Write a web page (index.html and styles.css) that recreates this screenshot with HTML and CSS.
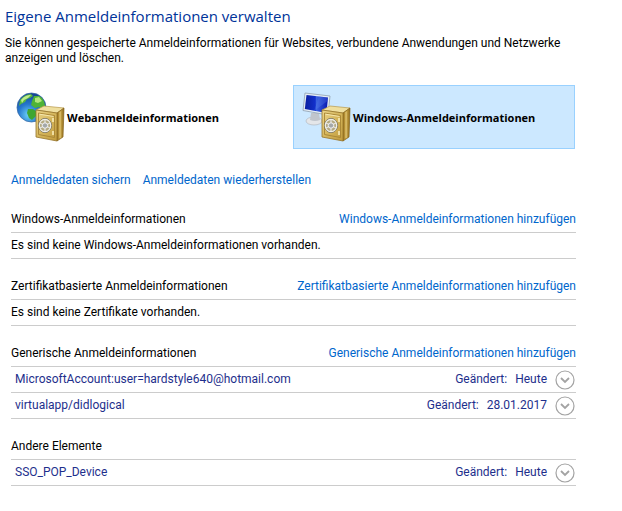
FILE: index.html
```
<!DOCTYPE html>
<html lang="de">
<head>
    <meta charset="UTF-8">
    <title>Anmeldeinformationsverwaltung</title>
    <link rel="stylesheet" href="styles.css">
</head>
<body>
    <!-- shared shapes -->
    <svg class="defs" width="0" height="0" aria-hidden="true">
        <defs>
            <linearGradient id="front" x1="0" y1="0" x2="1" y2="1">
                <stop offset="0" stop-color="#ecd68c"/>
                <stop offset="0.5" stop-color="#d5b65c"/>
                <stop offset="1" stop-color="#c09a3c"/>
            </linearGradient>
            <linearGradient id="side" x1="0" y1="0" x2="1" y2="0">
                <stop offset="0" stop-color="#a37b20"/>
                <stop offset="0.5" stop-color="#c9a74c"/>
                <stop offset="1" stop-color="#8d6716"/>
            </linearGradient>
            <radialGradient id="sea" cx="0.4" cy="0.75" r="0.8">
                <stop offset="0" stop-color="#6fd4fa"/>
                <stop offset="0.45" stop-color="#2678cf"/>
                <stop offset="1" stop-color="#123a86"/>
            </radialGradient>
            <linearGradient id="screen" x1="0" y1="0" x2="1" y2="0">
                <stop offset="0" stop-color="#0a1fa0"/>
                <stop offset="0.45" stop-color="#1230cc"/>
                <stop offset="0.5" stop-color="#3a62e0"/>
                <stop offset="1" stop-color="#0616b0"/>
            </linearGradient>
            <symbol id="safe" viewBox="0 0 50 50">
                <path d="M20 18 28 14 48 16 41 21z" fill="#efdf9f" stroke="#b8984a" stroke-width=".7"/>
                <path d="M41 21 48 16 47 45 41 49z" fill="url(#side)" stroke="#84621a" stroke-width=".7"/>
                <path d="M44 20v26" stroke="#e2c878" stroke-width="1"/>
                <path d="M20 18 41 21V49L20 45z" fill="url(#front)" stroke="#96742a" stroke-width=".8"/>
                <path d="M22.500 21 38.500 23.500V45.500L22.500 42.500z" fill="none" stroke="#a78434" stroke-width=".9"/>
                <path d="M23.500 22.200 37.500 24.500" stroke="#fbf0bd" stroke-width=".8"/>
                <path d="M37 26v4M37 39v4" stroke="#fbf0bd" stroke-width="1.500"/>
                <ellipse cx="29" cy="33.500" rx="6.500" ry="7" fill="#b5aa82" stroke="#777366" stroke-width="1"/>
                <ellipse cx="29" cy="33.500" rx="5.700" ry="6.200" fill="none" stroke="#f0efe7" stroke-width="1.200"/>
                <path d="M29 28v11M24 31l10 5M24 36l10-5" stroke="#e4e5e3" stroke-width="1.200"/>
                <circle cx="29" cy="33.500" r="2.700" fill="#a3a7a9" stroke="#f8f8f8" stroke-width=".9"/>
            </symbol>
            <symbol id="arrow" viewBox="0 0 20 20">
                <circle cx="10" cy="10" r="9" fill="#fff" stroke="#a3a3a3" stroke-width="1.200"/>
                <path d="M6 8l4 4 4-4" fill="none" stroke="#a3a3a3" stroke-width="1.800"/>
            </symbol>
        </defs>
    </svg>

    <main>
        <h1>Eigene Anmeldeinformationen verwalten</h1>
        <p class="intro">Sie können gespeicherte Anmeldeinformationen für Websites, verbundene Anwendungen und Netzwerke anzeigen und löschen.</p>

        <div class="vaults">
            <button class="vault" type="button">
                <svg class="vault-icon" viewBox="0 0 50 50" aria-hidden="true">
                    <circle cx="15.500" cy="15.500" r="14.500" fill="url(#sea)" stroke="#3b6da8" stroke-width=".8"/>
                    <path d="M4 8C7 4 11 2 15 2l2 2-3 2-3 1-2 3-4 2-2 2z" fill="#58b83c"/>
                    <path d="M12 17l5 0 4 3-1 4-4 4-3-2-2-5z" fill="#3fa632"/>
                    <path d="M18 4l5 0c4 2 6 6 6 11l-3 2-3-2-4 1-4-3 1-4z" fill="#4fb336"/>
                    <path d="M5 8C8 4 12 3 15 3l-3 3-4 2-2 3z" fill="#c0eb8e"/>
                    <path d="M19 6l4-1 3 4-4 2-3-1z" fill="#b2e67c"/>
                    <use href="#safe" width="50" height="50"/>
                </svg>
                Webanmeldeinformationen
            </button>
            <button class="vault selected" type="button" aria-pressed="true">
                <svg class="vault-icon" viewBox="0 0 50 50" aria-hidden="true">
                    <ellipse cx="12" cy="29" rx="8" ry="4" fill="#e4e6e9" stroke="#b3b8be" stroke-width=".7"/>
                    <path d="M9 21h8l1 7q-5 2-10 0z" fill="#c0c5cc"/>
                    <path d="M3 1 28 4 26 23 1 18.500z" fill="#e5edf4" stroke="#8f9fb0" stroke-width=".8"/>
                    <path d="M4.500 3 26 5.500 24.500 21 2.800 17z" fill="url(#screen)"/>
                    <path d="M17 4.500 26 5.500 25.500 9 12 19z" fill="#5c83ee" opacity=".3"/>
                    <use href="#safe" width="50" height="50"/>
                </svg>
                Windows-Anmeldeinformationen
            </button>
        </div>

        <nav class="backup">
            <a href="#">Anmeldedaten sichern</a>
            <a href="#">Anmeldedaten wiederherstellen</a>
        </nav>

        <section>
            <div class="head">
                <h2>Windows-Anmeldeinformationen</h2>
                <a href="#">Windows-Anmeldeinformationen hinzufügen</a>
            </div>
            <p class="empty">Es sind keine Windows-Anmeldeinformationen vorhanden.</p>
        </section>

        <section>
            <div class="head">
                <h2>Zertifikatbasierte Anmeldeinformationen</h2>
                <a href="#">Zertifikatbasierte Anmeldeinformationen hinzufügen</a>
            </div>
            <p class="empty">Es sind keine Zertifikate vorhanden.</p>
        </section>

        <section>
            <div class="head">
                <h2>Generische Anmeldeinformationen</h2>
                <a href="#">Generische Anmeldeinformationen hinzufügen</a>
            </div>
            <button class="entry" type="button">
                <span class="name">MicrosoftAccount:user=hardstyle640@hotmail.com</span>
                <span>Geändert:</span>
                <span>Heute</span>
                <svg class="arrow" aria-hidden="true"><use href="#arrow"/></svg>
            </button>
            <button class="entry" type="button">
                <span class="name">virtualapp/didlogical</span>
                <span>Geändert:</span>
                <span>28.01.2017</span>
                <svg class="arrow" aria-hidden="true"><use href="#arrow"/></svg>
            </button>
        </section>

        <section>
            <div class="head">
                <h2>Andere Elemente</h2>
            </div>
            <button class="entry" type="button">
                <span class="name">SSO_POP_Device</span>
                <span>Geändert:</span>
                <span>Heute</span>
                <svg class="arrow" aria-hidden="true"><use href="#arrow"/></svg>
            </button>
        </section>
    </main>
</body>
</html>
```
FILE: styles.css
```
*{box-sizing:border-box;}
body{margin:0;background-color:white;color:black;font-family:Roboto,sans-serif;font-size:12px;line-height:15px;}
main{padding:6px 46px 24px 5px;}
h1{margin:0;font-family:"Open Sans",sans-serif;font-size:15px;line-height:20px;font-weight:normal;color:#003399;}
h2{margin:0;font-size:12px;font-weight:normal;}
p{margin:0;}
a{color:#0066cc;text-decoration:none;}
a:hover{text-decoration:underline;}
button{font:inherit;cursor:pointer;}
.defs{position:absolute;}
.intro{margin-top:10px;}
/* Web / Windows */
.vaults{display:grid;grid-template-columns:1fr 1fr;gap:4px;margin:19px 1px 0 2px;}
.vault{display:flex;align-items:center;gap:1px;height:64px;padding:0 8px;border:1px solid transparent;background-color:transparent;color:black;font-family:"Open Sans",sans-serif;font-size:11px;font-weight:bold;text-align:left;}
.vault-icon{width:50px;height:50px;flex:none;}
.vault.selected{border-color:#99d1ff;background-color:#cce8ff;}
.backup{display:flex;gap:12px;margin:24px 0 0 6px;}
section{margin:14px 0 0 6px;}
.backup + section{margin-top:18px;}
.head{display:flex;justify-content:space-between;align-items:center;height:27px;border-bottom:1px solid #cccccc;}
.empty{height:26px;padding-top:5px;border-bottom:1px solid #cccccc;}
/* one saved credential */
.entry{display:flex;align-items:center;gap:8px;width:100%;height:26px;padding:0 1px 0 4px;border:0;border-bottom:1px solid #cccccc;background-color:transparent;color:#1e2f8c;text-align:left;}
.name{flex:1;}
.arrow{width:20px;height:20px;flex:none;}
```
